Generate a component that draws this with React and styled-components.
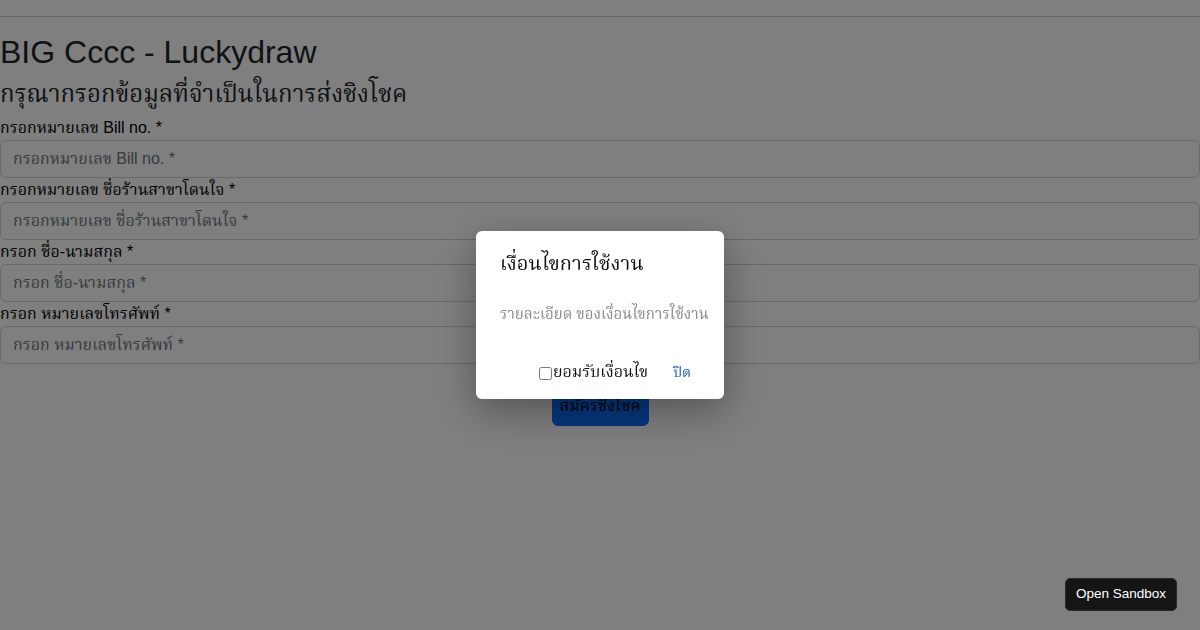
import React, { useState } from "react";
import styled, { createGlobalStyle } from "styled-components";

const GlobalStyle = createGlobalStyle`
  * { box-sizing: border-box; }
  body {
    margin: 0;
    font-family: "Liberation Sans", Arial, sans-serif;
    font-size: 16px;
    line-height: 1.5;
    color: #212529;
    background: #fff;
  }
`;

const thaiStack = `"Noto Serif Thai", "Liberation Sans", serif`;

const Thai = styled.span`
  font-family: ${thaiStack};
  font-stretch: condensed;
`;

// wraps Thai runs so they get the Thai face while Latin stays in Liberation Sans
const Mixed = ({ text }) =>
  text.split(/([\u0E00-\u0E7F]+)/).map((part, i) =>
    /[\u0E00-\u0E7F]/.test(part) ? <Thai key={i}>{part}</Thai> : part
  );

const Page = styled.div`
  padding: 0;
`;

const Rule = styled.hr`
  margin: 16px 0;
  border: 0;
  border-top: 1px solid #c8c8c8;
`;

const Title = styled.h2`
  margin: 0 0 8px;
  font-size: 32px;
  font-weight: 400;
  line-height: 1.2;
`;

const Subtitle = styled.h4`
  margin: 0 0 8px;
  height: 29px;
  font-size: 24px;
  font-weight: 400;
  line-height: 29px;
  white-space: nowrap;
`;

const Field = styled.div`
  display: flex;
  flex-direction: column;
`;

const Label = styled.label`
  display: block;
  height: 24px;
  font-size: 16px;
  line-height: 24px;
  color: #000;
  white-space: nowrap;
`;

const Input = styled.input`
  height: 38px;
  width: 100%;
  padding: 6px 12px;
  font-family: "Liberation Sans", "Noto Serif Thai", sans-serif;
  font-size: 16px;
  border: 1px solid #ced4da;
  border-radius: 6px;
  color: #212529;
  &::placeholder { color: #6c757d; }
`;

const Actions = styled.div`
  display: flex;
  justify-content: center;
  margin-top: 24px;
`;

const SubmitButton = styled.button`
  height: 38px;
  width: 97px;
  padding: 0 6px;
  background: #0d6efd;
  border: 1px solid #0d6efd;
  border-radius: 6px;
  color: #000;
  font-family: ${thaiStack};
  font-stretch: condensed;
  font-size: 16px;
  line-height: 36px;
  white-space: nowrap;
`;

const Backdrop = styled.div`
  position: fixed;
  inset: 0;
  background: rgba(0, 0, 0, 0.5);
  display: flex;
  align-items: center;
  justify-content: center;
`;

const Modal = styled.div`
  width: 248px;
  background: #fff;
  border-radius: 6px;
  padding: 20px 24px 14px;
  box-shadow: 0 12px 40px rgba(0, 0, 0, 0.35);
  font-family: ${thaiStack};
  font-stretch: condensed;
`;

const ModalTitle = styled.div`
  font-size: 20px;
  line-height: 28px;
  color: #111;
`;

const ModalBody = styled.div`
  margin-top: 24px;
  font-size: 15px;
  line-height: 24px;
  color: #8a8a8a;
  white-space: nowrap;
`;

const ModalFooter = styled.div`
  margin-top: 34px;
  display: flex;
  justify-content: flex-end;
  align-items: center;
  gap: 16px;
  line-height: 24px;
`;

const Agree = styled.label`
  display: flex;
  align-items: center;
  font-size: 16px;
  color: #111;
  input { margin: 0 1px 0 0; width: 13px; height: 13px; }
`;

const CloseLink = styled.button`
  background: none;
  border: 0;
  padding: 0 9px;
  color: #1f5fbf;
  font-family: inherit;
  font-stretch: inherit;
  font-size: 14px;
  cursor: pointer;
`;

const SandboxButton = styled.a`
  position: fixed;
  right: 23px;
  bottom: 19px;
  height: 33px;
  padding: 0 10px;
  display: flex;
  align-items: center;
  background: #151515;
  color: #fff;
  border-radius: 5px;
  border: 1px solid #2a2a2a;
  font-family: "Liberation Sans", Arial, sans-serif;
  font-size: 13.5px;
  text-decoration: none;
`;

const fields = [
  "กรอกหมายเลข Bill no. *",
  "กรอกหมายเลข ชื่อร้านสาขาโดนใจ *",
  "กรอก ชื่อ-นามสกุล *",
  "กรอก หมายเลขโทรศัพท์ *",
];

export default function App() {
  const [agree, setAgree] = useState(false);
  return (
    <>
      <GlobalStyle />
      <Page>
        <Rule />
        <Title>BIG Cccc - Luckydraw</Title>
        <Subtitle>
          <Mixed text="กรุณากรอกข้อมูลที่จำเป็นในการส่งชิงโชค" />
        </Subtitle>
        {fields.map((f) => (
          <Field key={f}>
            <Label>
              <Mixed text={f} />
            </Label>
            <Input placeholder={f} />
          </Field>
        ))}
        <Actions>
          <SubmitButton>สมัครชิงโชค</SubmitButton>
        </Actions>
      </Page>
      <Backdrop>
        <Modal>
          <ModalTitle>เงื่อนไขการใช้งาน</ModalTitle>
          <ModalBody>รายละเอียด ของเงื่อนไขการใช้งาน</ModalBody>
          <ModalFooter>
            <Agree>
              <input
                type="checkbox"
                checked={agree}
                onChange={(e) => setAgree(e.target.checked)}
              />
              ยอมรับเงื่อนไข
            </Agree>
            <CloseLink>ปิด</CloseLink>
          </ModalFooter>
        </Modal>
      </Backdrop>
      <SandboxButton href="#">Open Sandbox</SandboxButton>
    </>
  );
}
